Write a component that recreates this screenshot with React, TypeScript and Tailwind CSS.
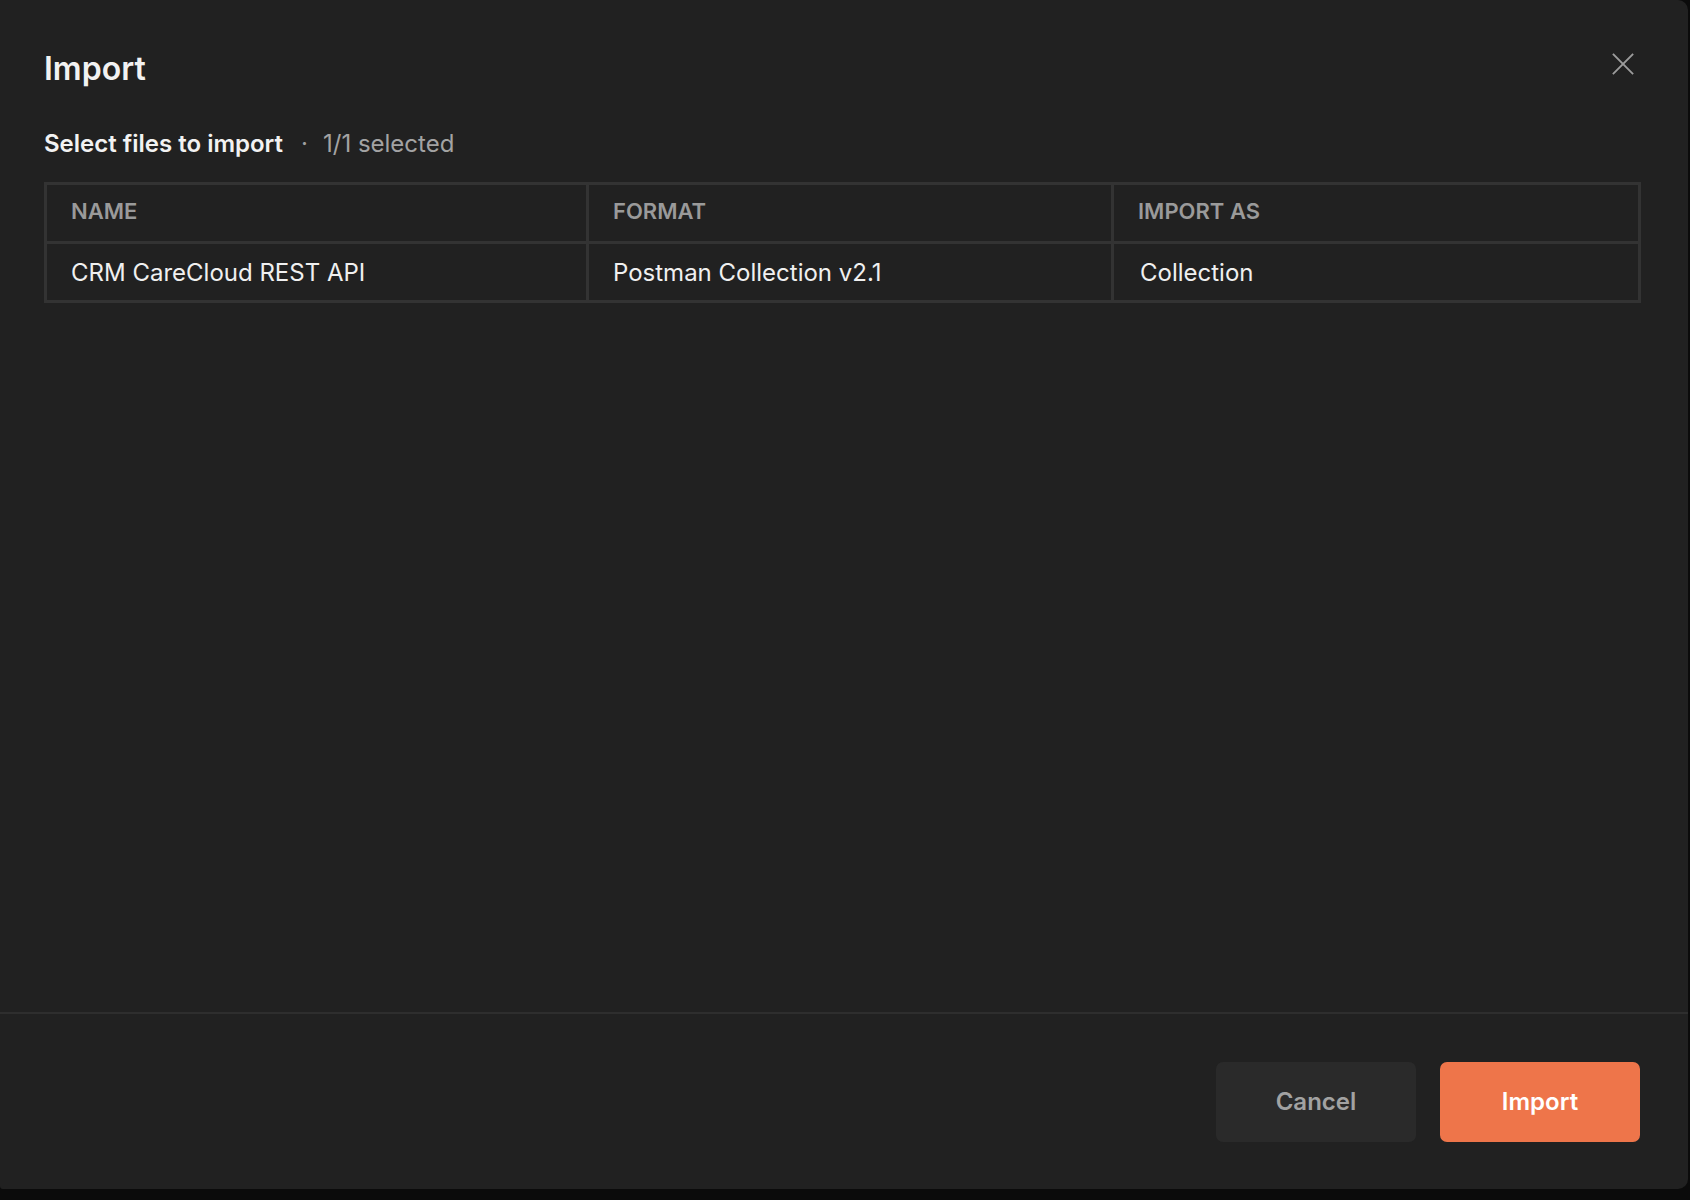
import { Fragment } from 'react';

const rows = [
  { name: 'CRM CareCloud REST API', format: 'Postman Collection v2.1', importAs: 'Collection' },
];

function CloseIcon() {
  return (
    <svg width="22" height="22" viewBox="0 0 22 22" fill="none" stroke="#9c9c9c" strokeWidth="1.8" strokeLinecap="square">
      <path d="M1.5 1.5 20.5 20.5" />
      <path d="M20.5 1.5 1.5 20.5" />
    </svg>
  );
}

export default function App() {
  return (
    <div className="w-[1690px] h-[1200px] bg-[#0b0b0b] font-['Inter',_'Noto_Sans',_sans-serif] antialiased">
      <div className="w-[1688px] h-[1189px] bg-[#212121] rounded-tr-[10px] rounded-br-[10px] rounded-bl-[3px] flex flex-col">
        {/* Header */}
        <div className="flex items-start justify-between pl-[44px] pr-[54px] pt-[49px]">
          <h1 className="text-[32px] leading-[40px] font-semibold text-[#f2f2f2]">Import</h1>
          <button className="mt-[4px]">
            <CloseIcon />
          </button>
        </div>

        {/* Body */}
        <div className="flex-1 px-[44px] pt-[40px]">
          <div className="flex items-center text-[24px] leading-[30px]">
            <span className="font-semibold text-[#f2f2f2]">Select files to import</span>
            <span className="ml-[18px] mr-[15px] text-[#a0a0a0]">·</span>
            <span className="text-[#a3a3a3]">1/1 selected</span>
          </div>

          <table className="mt-[23px] w-[1594px] table-fixed border-collapse">
            <colgroup>
              <col className="w-[542px]" />
              <col className="w-[525px]" />
              <col className="w-[527px]" />
            </colgroup>
            <thead>
              <tr className="h-[59px]">
                <th className="border-[3px] border-[#333333] px-[24px] pb-[4px] text-left text-[22px] font-semibold text-[#9a9a9a] uppercase">Name</th>
                <th className="border-[3px] border-[#333333] px-[24px] pb-[4px] text-left text-[22px] font-semibold text-[#9a9a9a] uppercase">Format</th>
                <th className="border-[3px] border-[#333333] px-[24px] pb-[4px] text-left text-[22px] font-semibold text-[#9a9a9a] uppercase">Import as</th>
              </tr>
            </thead>
            <tbody>
              {rows.map((r) => (
                <Fragment key={r.name}>
                  <tr className="h-[59px]">
                    <td className="border-[3px] border-[#333333] px-[24px] pt-[2px] text-[24px] text-[#f0f0f0]">{r.name}</td>
                    <td className="border-[3px] border-[#333333] px-[24px] pt-[2px] text-[24px] text-[#f0f0f0]">{r.format}</td>
                    <td className="border-[3px] border-[#333333] pl-[26px] pr-[24px] pt-[2px] text-[24px] text-[#f0f0f0]">{r.importAs}</td>
                  </tr>
                </Fragment>
              ))}
            </tbody>
          </table>
        </div>

        {/* Footer */}
        <div className="border-t-2 border-[#2e2e2e] flex justify-end gap-[24px] pt-[48px] pb-[47px] pr-[48px]">
          <button className="w-[200px] h-[80px] rounded-[7px] bg-[#2a2a2a] text-[24px] font-semibold text-[#a2a2a2]">
            Cancel
          </button>
          <button className="w-[200px] h-[80px] rounded-[7px] bg-[#ee754a] text-[24px] font-semibold text-white">
            Import
          </button>
        </div>
      </div>
    </div>
  );
}
